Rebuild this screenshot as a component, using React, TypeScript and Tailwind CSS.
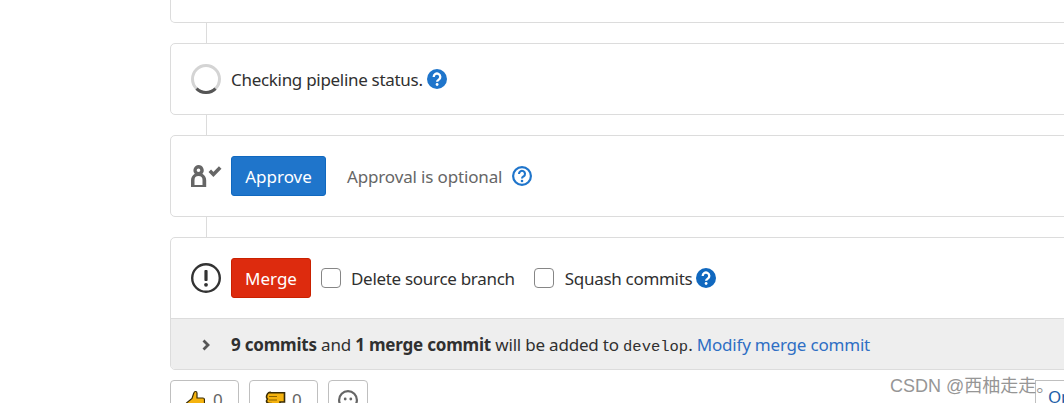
function HelpFilled({ color }: { color: string }) {
  return (
    <svg width="20" height="20" viewBox="0 0 20 20" className="shrink-0">
      <circle cx="10" cy="10" r="10" fill={color} />
      <path d="M6.700 7.900a3.300 3.300 0 1 1 5.100 2.700c-1.100.7-1.700 1.100-1.700 2.200" fill="none" stroke="#fff" strokeWidth="2.300" />
      <circle cx="10.100" cy="15.500" r="1.400" fill="#fff" />
    </svg>
  );
}

function HelpOutline() {
  return (
    <svg width="20" height="20" viewBox="0 0 20 20" className="shrink-0">
      <circle cx="10" cy="10" r="8.900" fill="none" stroke="#1f75cb" strokeWidth="2.200" />
      <path d="M7 7.900a3 3 0 1 1 4.700 2.400c-1.100.7-1.700 1-1.700 2.100" fill="none" stroke="#1f75cb" strokeWidth="2.100" />
      <circle cx="10" cy="15" r="1.300" fill="#1f75cb" />
    </svg>
  );
}

function Spinner() {
  return (
    <svg width="30" height="30" viewBox="0 0 30 30" className="shrink-0">
      <circle cx="15" cy="15" r="13.500" fill="none" stroke="#d4d4d4" strokeWidth="3" />
      <path d="M5.500 24.600a13.500 13.500 0 0 0 19 0" fill="none" stroke="#555" strokeWidth="3" />
    </svg>
  );
}

function ApprovalIcon() {
  return (
    <svg width="31" height="24" viewBox="0 0 31 24" className="shrink-0">
      <path
        fillRule="evenodd"
        fill="#666"
        d="M7.500 1a5.300 5.300 0 0 1 3.900 8.800c2.300 1.300 3.800 3.600 3.800 6.400V23H0v-6.800c0-2.800 1.500-5.100 3.800-6.400A5.300 5.300 0 0 1 7.500 1Zm0 3.500a1.800 1.800 0 1 0 0 3.600 1.800 1.800 0 0 0 0-3.600Zm0 7.500A4 4 0 0 0 3.500 16v5h8v-5a4 4 0 0 0-4-4Z"
      />
      <path d="M18.800 6.800l3.600 3.600 6.800-6.800" fill="none" stroke="#666" strokeWidth="3.600" />
    </svg>
  );
}

function WarningIcon() {
  return (
    <svg width="30" height="30" viewBox="0 0 30 30" className="shrink-0">
      <circle cx="15" cy="15" r="13.800" fill="none" stroke="#333" strokeWidth="2.400" />
      <rect x="13.400" y="7" width="3.200" height="11" rx="1" fill="#333" />
      <circle cx="15" cy="21.800" r="1.900" fill="#333" />
    </svg>
  );
}

function ThumbUp() {
  return (
    <svg width="20" height="20" viewBox="0 0 20 20" className="shrink-0">
      <path d="M1.500 13 7 8.500 8.800 3c.6-2 3.200-2 3.200.200V8h6c1 0 1.500 1 1.500 2v10H1.500Z" fill="#f5b30f" stroke="#3a2c05" strokeWidth="1.200" />
    </svg>
  );
}

function ThumbDown() {
  return (
    <svg width="22" height="20" viewBox="0 0 22 20" className="shrink-0">
      <path d="M6 2.700h14.500V12H16v8H7v-6.500H6c-2.500 0-3.500-1-3.500-2.500 0-1 .5-1.500 1-2-.5-.5-1-1-1-2 0-2 1.500-4.800 3.500-4.800Z" fill="#f5b30f" stroke="#3a2c05" strokeWidth="1.600" />
      <path d="M5 6.500h8M5 10h8" stroke="#8a6200" strokeWidth="1" />
    </svg>
  );
}

function Smiley() {
  return (
    <svg width="20" height="20" viewBox="0 0 20 20" className="shrink-0">
      <circle cx="10" cy="10" r="8.900" fill="none" stroke="#666" strokeWidth="2.200" />
      <circle cx="7.200" cy="9" r="1.400" fill="#666" />
      <circle cx="12.800" cy="9" r="1.400" fill="#666" />
      <path d="M6 14c2 1.800 6 1.800 8 0" fill="none" stroke="#666" strokeWidth="1.500" />
    </svg>
  );
}

function Connector() {
  return <div className="ml-[36px] h-[20px] w-px bg-[#dcdcdc]" />;
}

export default function App() {
  return (
    <div className="relative h-[403px] w-[1064px] overflow-hidden bg-white pl-[170px] font-['Noto_Sans','Open_Sans',sans-serif] text-[17px] tracking-[-0.3px] text-[#303030]">
      <div className="w-[1000px]">
        <div className="h-[23px] rounded-b-[5px] border border-t-0 border-[#dcdcdc]" />
        <Connector />

        <div className="flex h-[72px] items-center rounded-[5px] border border-[#dcdcdc] pl-[20px]">
          <Spinner />
          <span className="ml-[10px] pt-[2px]">Checking pipeline status.</span>
          <span className="ml-[4px]">
            <HelpFilled color="#1f75cb" />
          </span>
        </div>
        <Connector />

        <div className="flex h-[82px] items-center rounded-[5px] border border-[#dcdcdc] pl-[20px]">
          <ApprovalIcon />
          <button className="ml-[9px] h-10 w-[95px] rounded-[3px] border border-[#1068bf] bg-[#1f75cb] pt-[2px] tracking-normal text-white">
            Approve
          </button>
          <span className="ml-[21px] pt-[2px] tracking-[-0.15px] text-[#666]">Approval is optional</span>
          <span className="ml-[10px]">
            <HelpOutline />
          </span>
        </div>
        <Connector />

        <div className="overflow-hidden rounded-[5px] border border-[#dcdcdc]">
          <div className="flex h-[80px] items-center pl-[20px]">
            <WarningIcon />
            <button className="ml-[10px] h-10 w-[80px] rounded-[3px] border border-[#c92100] bg-[#dd2b0e] pt-[2px] tracking-normal text-white">
              Merge
            </button>
            <span className="ml-[10px] h-5 w-5 shrink-0 rounded-[4px] border border-[#868686] bg-white" />
            <span className="ml-[10px] pt-[2px]">Delete source branch</span>
            <span className="ml-[19px] h-5 w-5 shrink-0 rounded-[4px] border border-[#868686] bg-white" />
            <span className="ml-[11px] pt-[2px]">Squash commits</span>
            <span className="ml-[4px]">
              <HelpFilled color="#1068bf" />
            </span>
          </div>
          <div className="flex h-[51px] items-center border-t border-[#dcdcdc] bg-[#eeeeee] pl-[30px] pt-[2px]">
            <svg width="10" height="12" viewBox="0 0 10 12" className="shrink-0">
              <path d="M2.500 1.500 7 6l-4.500 4.500" fill="none" stroke="#555" strokeWidth="2.800" />
            </svg>
            <span className="ml-[20px] whitespace-pre pt-[2px] tracking-[-0.2px]">
              <b>9 commits</b> and <b>1 merge commit</b> will be added to{" "}
              <code className="font-['Liberation_Mono',monospace] text-[15.500px] tracking-normal">develop</code>.{" "}
              <span className="text-[#2f6fc4]">Modify merge commit</span>
            </span>
          </div>
        </div>

        <div className="mt-[10px] flex gap-[10px]">
          <div className="flex h-[40px] w-[69px] items-center gap-[8px] rounded-[4px] border border-[#bfbfbf] pl-[14px]">
            <ThumbUp />
            <span className="text-[#666]">0</span>
          </div>
          <div className="flex h-[40px] w-[69px] items-center gap-[6px] rounded-[4px] border border-[#bfbfbf] pl-[14px]">
            <ThumbDown />
            <span className="text-[#666]">0</span>
          </div>
          <div className="flex h-[40px] w-[40px] items-center justify-center rounded-[4px] border border-[#bfbfbf]">
            <Smiley />
          </div>
        </div>
      </div>

      {/* cut-off button in the bottom right corner */}
      <div className="absolute left-[1035px] top-[380px] h-[40px] w-[60px] border border-[#bfbfbf] pl-[12px] pt-[3px] text-[#1f5fa8]">
        Op
      </div>

      {/* CSDN watermark */}
      <div className="absolute left-[890px] top-[373px] whitespace-nowrap font-['Liberation_Sans','Noto_Sans_CJK_SC',sans-serif] text-[18px] tracking-normal text-[#969696]">
        CSDN @西柚走走。
      </div>
    </div>
  );
}
